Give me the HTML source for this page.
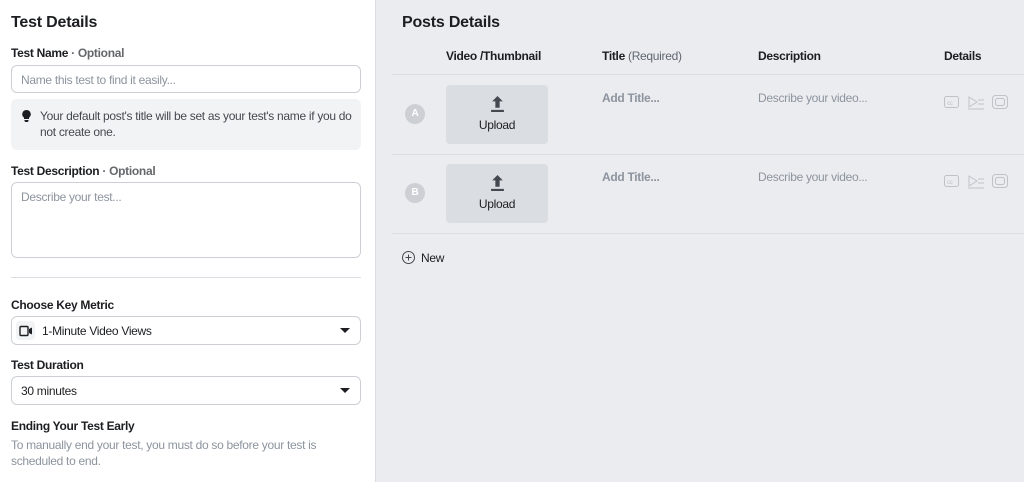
<!DOCTYPE html>
<html><head><meta charset="utf-8"><style>
*{box-sizing:border-box;margin:0;padding:0}
body{width:1024px;height:482px;overflow:hidden;font-family:"Liberation Sans",sans-serif;background:#ebecf0;position:relative;color:#1c1e21;letter-spacing:-0.3px}
.a{position:absolute}
#left{left:0;top:0;width:376px;height:482px;background:#fff;border-right:1px solid #dadde1}
h1{font-size:16px;font-weight:bold;color:#1c1e21;letter-spacing:-0.2px}
.lbl{font-size:12px;font-weight:bold;color:#1c1e21}
.lbl span{color:#65676b}
.inp{border:1px solid #ccd0d5;border-radius:6px;background:#fff;font-size:12px;color:#606770}
.ph{color:#8d949e}
.arrow{position:absolute;right:10px;top:11px;width:0;height:0;border-left:5px solid transparent;border-right:5px solid transparent;border-top:5px solid #1c1e21}
.hd{font-size:12px;font-weight:bold;color:#1c1e21}
.up{width:102px;height:59px;background:#dadde1;border-radius:4px;text-align:center;font-size:12px;color:#1c1e21}
.circ{width:20px;height:20px;border-radius:50%;background:#ccd0d5;color:#fff;font-size:10px;font-weight:bold;text-align:center;line-height:20px}
.line{height:1px;background:#dadde1}
.gr{font-size:12px;color:#8d949e}
</style></head><body>
<div id="left" class="a">
<h1 class="a" style="left:11px;top:14px">Test Details</h1>
<div class="a lbl" style="left:11px;top:46px">Test Name <span>· Optional</span></div>
<div class="a inp" style="left:11px;top:65px;width:350px;height:28px;padding:7px 9px"><span class="ph">Name this test to find it easily...</span></div>
<div class="a" style="left:11px;top:99px;width:350px;height:51px;background:#f2f3f5;border-radius:6px;font-size:12px;line-height:16px;color:#444950;padding:9px 8px 0 29px">Your default post's title will be set as your test's name if you do not create one.
<svg class="a" style="left:11px;top:11px" width="9" height="12" viewBox="0 0 9 12"><path d="M4.5 0A4.2 4.2 0 0 0 2 7.6V9h5V7.6A4.2 4.2 0 0 0 4.5 0zM2.5 10h4v1.2l-1 .8h-2l-1-.8z" fill="#1c1e21"/></svg></div>
<div class="a lbl" style="left:11px;top:164px">Test Description <span>· Optional</span></div>
<div class="a inp" style="left:11px;top:182px;width:350px;height:76px;padding:7px 9px"><span class="ph">Describe your test...</span></div>
<div class="a line" style="left:11px;top:277px;width:350px"></div>
<div class="a lbl" style="left:11px;top:298px">Choose Key Metric</div>
<div class="a inp" style="left:11px;top:316px;width:350px;height:29px;color:#1c1e21">
<div class="a" style="left:4px;top:4px;width:19px;height:19px;background:#f2f3f5;border-radius:4px"></div>
<svg class="a" style="left:7px;top:8px" width="14" height="12" viewBox="0 0 14 12"><rect x="1" y="1.5" width="8" height="9" rx="1" fill="none" stroke="#1c1e21" stroke-width="1.4"/><path d="M10 4l3-1.5v7L10 8z" fill="#1c1e21"/></svg>
<span class="a" style="left:30px;top:7px">1-Minute Video Views</span><div class="arrow"></div></div>
<div class="a lbl" style="left:11px;top:358px">Test Duration</div>
<div class="a inp" style="left:11px;top:376px;width:350px;height:29px;color:#1c1e21"><span class="a" style="left:9px;top:7px">30 minutes</span><div class="arrow"></div></div>
<div class="a lbl" style="left:11px;top:419px">Ending Your Test Early</div>
<div class="a" style="left:11px;top:437px;width:320px;font-size:12px;line-height:16px;color:#8d949e">To manually end your test, you must do so before your test is scheduled to end.</div>
</div>

<h1 class="a" style="left:402px;top:14px">Posts Details</h1>
<div class="a hd" style="left:446px;top:49px">Video /Thumbnail</div>
<div class="a hd" style="left:602px;top:49px">Title <span style="font-weight:normal;color:#606770">(Required)</span></div>
<div class="a hd" style="left:758px;top:49px">Description</div>
<div class="a hd" style="left:944px;top:49px">Details</div>
<div class="a line" style="left:392px;top:74px;width:632px"></div>
<div class="a line" style="left:392px;top:154px;width:632px"></div>
<div class="a line" style="left:392px;top:233px;width:632px"></div>

<div class="a circ" style="left:405px;top:104px">A</div>
<div class="a circ" style="left:405px;top:183px">B</div>
<div class="a up" style="left:446px;top:85px"><svg style="margin-top:11px" width="13" height="16" viewBox="0 0 12 15"><path d="M6 0L1 5h3v6h4V5h3z M0 13h12v2H0z" fill="#444950"/></svg><div style="margin-top:3px">Upload</div></div>
<div class="a up" style="left:446px;top:164px"><svg style="margin-top:11px" width="13" height="16" viewBox="0 0 12 15"><path d="M6 0L1 5h3v6h4V5h3z M0 13h12v2H0z" fill="#444950"/></svg><div style="margin-top:3px">Upload</div></div>

<div class="a" style="left:602px;top:91px;font-size:12px;font-weight:bold;color:#8d949e">Add Title...</div>
<div class="a" style="left:602px;top:170px;font-size:12px;font-weight:bold;color:#8d949e">Add Title...</div>
<div class="a gr" style="left:758px;top:91px">Describe your video...</div>
<div class="a gr" style="left:758px;top:170px">Describe your video...</div>

<svg class="a" style="left:944px;top:94px" width="66" height="16" viewBox="0 0 66 16"><g fill="none" stroke="#bec3c9" stroke-width="1"><rect x="0.5" y="2.5" width="14" height="11" rx="2"/><text x="3" y="11" font-size="6" fill="#bec3c9" stroke="none" font-family="Liberation Sans">cc</text><path d="M25 3l8 5-8 5zM34 6h6M34 10h6M24 15h16"/><rect x="48.5" y="1.5" width="15" height="13" rx="3"/><rect x="51.5" y="4.5" width="9" height="7" rx="2"/></g></svg>
<svg class="a" style="left:944px;top:173px" width="66" height="16" viewBox="0 0 66 16"><g fill="none" stroke="#bec3c9" stroke-width="1"><rect x="0.5" y="2.5" width="14" height="11" rx="2"/><text x="3" y="11" font-size="6" fill="#bec3c9" stroke="none" font-family="Liberation Sans">cc</text><path d="M25 3l8 5-8 5zM34 6h6M34 10h6M24 15h16"/><rect x="48.5" y="1.5" width="15" height="13" rx="3"/><rect x="51.5" y="4.5" width="9" height="7" rx="2"/></g></svg>

<svg class="a" style="left:402px;top:251px" width="13" height="13" viewBox="0 0 13 13"><circle cx="6.5" cy="6.5" r="6" fill="none" stroke="#444950"/><path d="M6.5 3.5v6M3.5 6.5h6" stroke="#444950"/></svg>
<div class="a" style="left:421px;top:251px;font-size:12px;color:#1c1e21">New</div>
</body></html>
